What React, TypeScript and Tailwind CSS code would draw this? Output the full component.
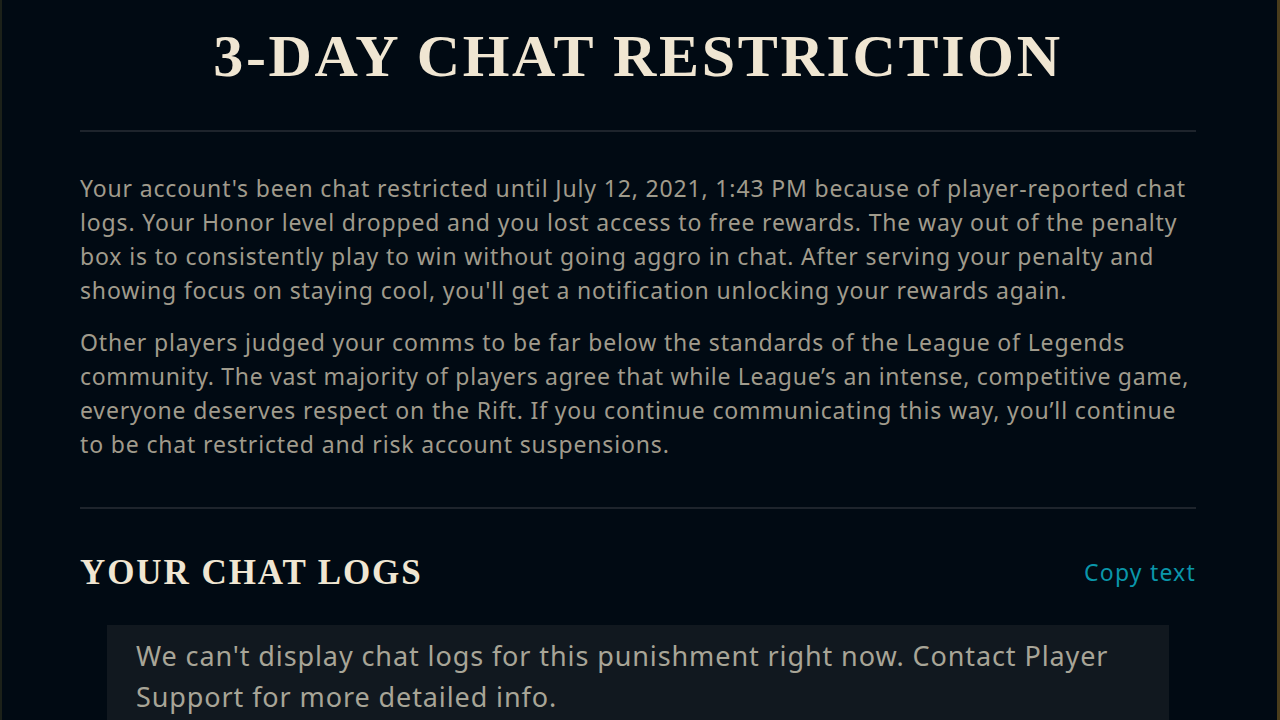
export default function App() {
  const sans = { fontFamily: '"Noto Sans", "Open Sans", sans-serif' };
  const serif = { fontFamily: '"Liberation Serif", "DejaVu Serif", serif' };
  return (
    <div className="w-[1280px] h-[720px] overflow-hidden bg-[#010a13] flex">
      <div className="w-[2px] shrink-0 bg-[#1c2119]" />
      <div className="flex-1 min-w-0 pl-[78px] pr-[81px] flex flex-col">
        <h1
          className="text-center text-[60px] font-bold text-[#f0e6d2] tracking-[0.045em] leading-none pt-[26px] pb-[24px]"
          style={serif}
        >
          3-DAY CHAT RESTRICTION
        </h1>
        <div className="h-[2px] bg-[#1e242c] mt-[20px] shrink-0" />
        <div className="pt-[39px] text-[23px] tracking-[0.85px] leading-[34px] text-[#a09b8c] min-w-0" style={sans}>
          <p className="whitespace-nowrap">
            Your account's been chat restricted until July 12, 2021, 1:43 PM because of player-reported chat
            <br />
            logs. Your Honor level dropped and you lost access to free rewards. The way out of the penalty
            <br />
            box is to consistently play to win without going aggro in chat. After serving your penalty and
            <br />
            showing focus on staying cool, you'll get a notification unlocking your rewards again.
          </p>
          <p className="whitespace-nowrap mt-[18px]">
            Other players judged your comms to be far below the standards of the League of Legends
            <br />
            <span className="tracking-[0.7px]">
              community. The vast majority of players agree that while League’s an intense, competitive game,
            </span>
            <br />
            everyone deserves respect on the Rift. If you continue communicating this way, you’ll continue
            <br />
            to be chat restricted and risk account suspensions.
          </p>
        </div>
        <div className="h-[2px] bg-[#1e242c] mt-[46px] shrink-0" />
        <div className="flex items-center justify-between mt-[46px]">
          <h2 className="text-[35px] font-bold text-[#f0e6d2] tracking-[0.055em] leading-none" style={serif}>
            YOUR CHAT LOGS
          </h2>
          <span className="text-[23px] tracking-[1.2px] text-[#0a96aa] leading-none" style={sans}>
            Copy text
          </span>
        </div>
        <div
          className="mt-[35px] mx-[27px] bg-[#11181f] px-[29px] pt-[10px] pb-[20px] text-[27px] tracking-[0.9px] leading-[41px] text-[#a8a597] whitespace-nowrap"
          style={sans}
        >
          We can't display chat logs for this punishment right now. Contact Player
          <br />
          Support for more detailed info.
        </div>
      </div>
      <div className="w-[3px] shrink-0 bg-[#4a3d1c]" />
    </div>
  );
}
